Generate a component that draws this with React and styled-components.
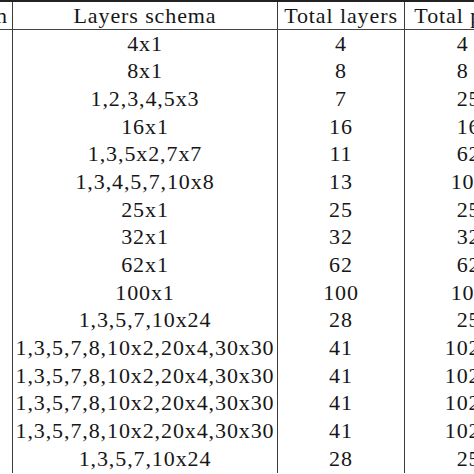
import React from 'react';
import styled, { createGlobalStyle } from 'styled-components';

const GlobalStyle = createGlobalStyle`
  html, body {
    margin: 0;
    padding: 0;
    background: #ffffff;
    overflow: hidden;
  }
  body {
    font-family: "Liberation Serif", "Times New Roman", serif;
    color: #161616;
  }
`;

const COLUMNS = '13px 265px 127px 180px';

const Sheet = styled.div`
  width: 474px;
  height: 474px;
  overflow: hidden;
`;

const Table = styled.div`
  display: flex;
  flex-direction: column;
  width: 585px;
  border-top: 2px solid #222;
`;

const Row = styled.div`
  display: grid;
  grid-template-columns: ${COLUMNS};
  height: ${props => props.head ? '28px' : '27.67px'};
  border-bottom: ${props => props.head ? '1px solid #444' : 'none'};
  box-sizing: border-box;
`;

const Cell = styled.div`
  display: flex;
  align-items: center;
  justify-content: ${props => props.edge ? 'flex-end' : 'center'};
  padding-right: ${props => props.edge ? '4px' : '0'};
  border-right: ${props => props.last ? 'none' : '1.5px solid #3c3c3c'};
  box-sizing: border-box;
  overflow: hidden;
  white-space: nowrap;
  font-size: 22px;
  letter-spacing: 0.9px;
  line-height: 1;
`;

// thin space used as a digit-group separator
const T = '\u2009';

const rows = [
  ['4x1', '4', `4${T}36800`],
  ['8x1', '8', `8${T}73600`],
  ['1,2,3,4,5x3', '7', `25${T}6032`],
  ['16x1', '16', `16${T}6400`],
  ['1,3,5x2,7x7', '11', `62${T}7360`],
  ['1,3,4,5,7,10x8', '13', `100${T}4640`],
  ['25x1', '25', `25${T}6000`],
  ['32x1', '32', `32${T}7680`],
  ['62x1', '62', `62${T}8736`],
  ['100x1', '100', `102${T}4000`],
  ['1,3,5,7,10x24', '28', `25${T}6608`],
  ['1,3,5,7,8,10x2,20x4,30x30', '41', `102${T}40512`],
  ['1,3,5,7,8,10x2,20x4,30x30', '41', `102${T}40512`],
  ['1,3,5,7,8,10x2,20x4,30x30', '41', `102${T}40512`],
  ['1,3,5,7,8,10x2,20x4,30x30', '41', `102${T}40512`],
  ['1,3,5,7,10x24', '28', `25${T}6608`],
];

const App = () => {
  return (
    <Sheet>
      <GlobalStyle />
      <Table>
        <Row head>
          <Cell edge>Configuration</Cell>
          <Cell>Layers schema</Cell>
          <Cell>Total layers</Cell>
          <Cell last>Total parameters</Cell>
        </Row>
        {rows.map((row, i) => (
          <Row key={i}>
            <Cell edge />
            <Cell>{row[0]}</Cell>
            <Cell>{row[1]}</Cell>
            <Cell last>{row[2]}</Cell>
          </Row>
        ))}
      </Table>
    </Sheet>
  );
};

export default App;
